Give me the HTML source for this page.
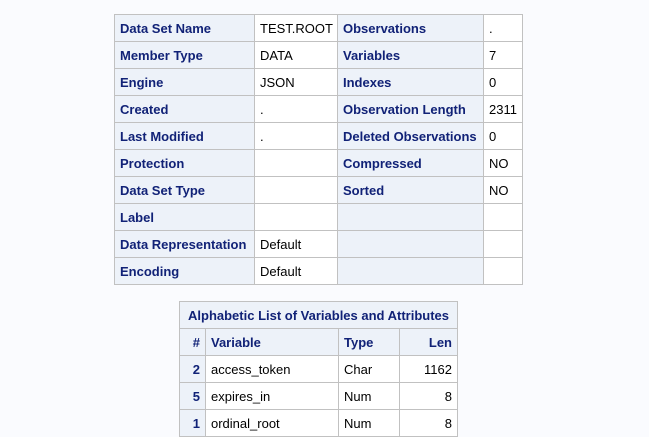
<!DOCTYPE html>
<html><head><style>
body{margin:0;background:#fafbfe;font-family:"Liberation Sans",Arial,sans-serif;font-size:13px;}
table{position:absolute;border-collapse:collapse;table-layout:fixed;}
td{border:1px solid #c1c1c1;height:27px;padding:0 5px;box-sizing:border-box;white-space:nowrap;overflow:hidden;color:#000;background:#fff;}
td.h{background:#edf2f9;color:#112277;font-weight:bold;}
td.r{text-align:right;}
</style></head><body>
<table style="left:114px;top:14px;width:408px">
<colgroup><col style="width:140px"><col style="width:83px"><col style="width:146px"><col style="width:39px"></colgroup>
<tr><td class="h">Data Set Name</td><td>TEST.ROOT</td><td class="h">Observations</td><td>.</td></tr>
<tr><td class="h">Member Type</td><td>DATA</td><td class="h">Variables</td><td>7</td></tr>
<tr><td class="h">Engine</td><td>JSON</td><td class="h">Indexes</td><td>0</td></tr>
<tr><td class="h">Created</td><td>.</td><td class="h">Observation Length</td><td>2311</td></tr>
<tr><td class="h">Last Modified</td><td>.</td><td class="h">Deleted Observations</td><td>0</td></tr>
<tr><td class="h">Protection</td><td></td><td class="h">Compressed</td><td>NO</td></tr>
<tr><td class="h">Data Set Type</td><td></td><td class="h">Sorted</td><td>NO</td></tr>
<tr><td class="h">Label</td><td></td><td class="h"></td><td></td></tr>
<tr><td class="h">Data Representation</td><td>Default</td><td class="h"></td><td></td></tr>
<tr><td class="h">Encoding</td><td>Default</td><td class="h"></td><td></td></tr>
</table>
<table style="left:179px;top:301px;width:278px">
<colgroup><col style="width:26px"><col style="width:133px"><col style="width:61px"><col style="width:58px"></colgroup>
<tr><td class="h" colspan="4" style="text-align:center">Alphabetic List of Variables and Attributes</td></tr>
<tr><td class="h r">#</td><td class="h">Variable</td><td class="h">Type</td><td class="h r">Len</td></tr>
<tr><td class="h r">2</td><td>access_token</td><td>Char</td><td class="r">1162</td></tr>
<tr><td class="h r">5</td><td>expires_in</td><td>Num</td><td class="r">8</td></tr>
<tr><td class="h r">1</td><td>ordinal_root</td><td>Num</td><td class="r">8</td></tr>
</table>
</body></html>
